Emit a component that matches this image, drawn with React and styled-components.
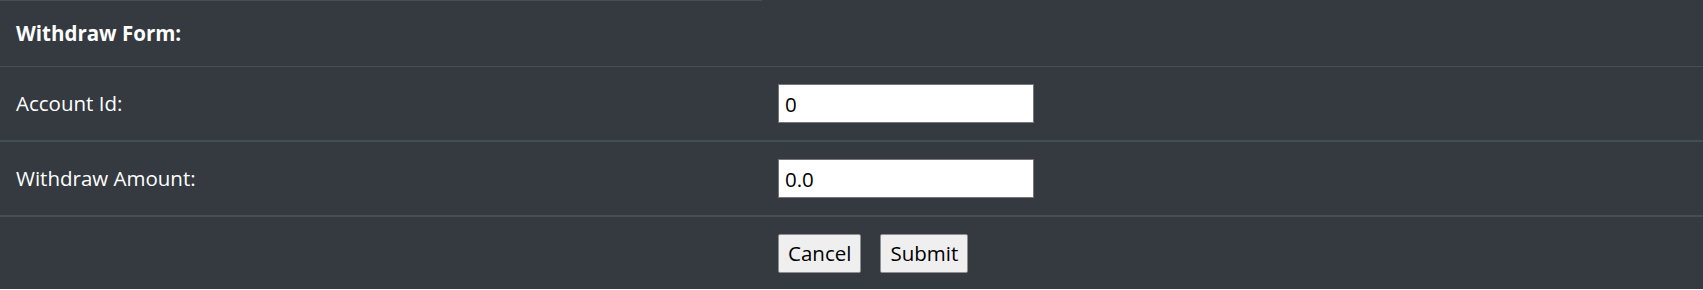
import React from 'react';
import styled, { createGlobalStyle } from 'styled-components';

const GlobalStyle = createGlobalStyle`
	body {
		margin: 0;
		background: #fff;
		font-family: "Open Sans", "Liberation Sans", sans-serif;
	}
`;

const FormTable = styled.div`
	display: grid;
	grid-template-columns: 762px 1fr;
	background: #343a40;
	color: #fff;
	font-size: 20.5px;
`;

const HeadCell = styled.div`
	border-top: ${p => (p.empty ? '0' : '1px solid #454d55')};
	padding: ${p => (p.empty ? '17px' : '16px')} 16px 16px;
	line-height: 33px;
	font-weight: 700;
`;

const Cell = styled.div`
	border-top: ${p => p.border}px solid #454d55;
	padding: 17px 16px ${p => (p.last ? 16 : 17)}px;
	min-height: 39px;
	line-height: 33px;
	display: flex;
	align-items: flex-start;
	gap: 19px;
`;

const Label = styled.span`
	padding-top: 3px;
`;

const Field = styled.input`
	box-sizing: border-box;
	width: 256px;
	height: 39px;
	margin: 0;
	padding: 0 6px;
	border: 1px solid #767676;
	background: #fff;
	color: #000;
	font: inherit;
	font-size: 20.5px;
	outline: none;
`;

const Button = styled.button`
	box-sizing: border-box;
	height: 39px;
	margin: 0;
	padding: 0 9px;
	border: 1px solid #8f8f8f;
	border-radius: 2px;
	background: #efefef;
	color: #000;
	font: inherit;
	font-size: 20.5px;
	cursor: pointer;
`;

const rows = [
	{ label: 'Account Id:', value: '0', border: 1 },
	{ label: 'Withdraw Amount:', value: '0.0', border: 2 },
];

const App = () => {
	return (
		<>
			<GlobalStyle />
			<FormTable>
				<HeadCell>Withdraw Form:</HeadCell>
				<HeadCell empty />

				{rows.map(row => (
					<React.Fragment key={row.label}>
						<Cell border={row.border}>
							<Label>{row.label}</Label>
						</Cell>
						<Cell border={row.border}>
							<Field type="text" defaultValue={row.value} />
						</Cell>
					</React.Fragment>
				))}

				<Cell border={2} last />
				<Cell border={2} last>
					<Button type="button">Cancel</Button>
					<Button type="submit">Submit</Button>
				</Cell>
			</FormTable>
		</>
	);
};

export default App;
